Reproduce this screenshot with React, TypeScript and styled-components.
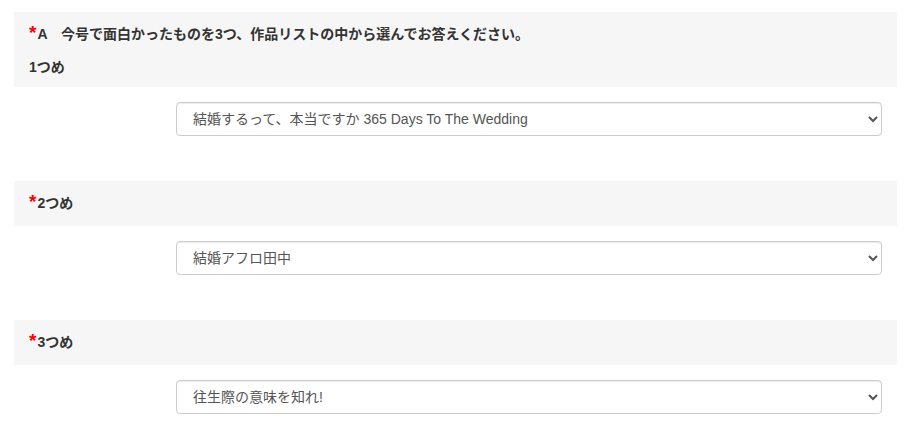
import React from "react";
import styled, { createGlobalStyle } from "styled-components";

const Global = createGlobalStyle`
  html, body { margin: 0; padding: 0; background: #fff; }
  body {
    font-family: "Liberation Sans", Arial, "Noto Sans CJK JP", sans-serif;
    font-size: 14px;
    color: #333;
  }
`;

const Page = styled.div`
  padding: 12px 21px 0 14px;
  display: flex;
  flex-direction: column;
`;

const Question = styled.section`
  display: flex;
  flex-direction: column;
  margin-bottom: 45px;
`;

const Heading = styled.div<{ $tall?: boolean }>`
  background: #f6f6f6;
  padding: ${(p) => (p.$tall ? "12px 15px 10px" : "12px 15px 13px")};
  display: flex;
  flex-direction: column;
  gap: 13px;
  font-weight: bold;
`;

const Line = styled.div`
  line-height: 20px;
  white-space: nowrap;
`;

const Req = styled.span`
  color: #ff0000;
  font-size: 19px;
  font-weight: bold;
  line-height: 18px;
  vertical-align: top;
  display: inline-block;
  margin-right: 1px;
`;

const Field = styled.div`
  padding: 15px 15px 0 162px;
`;

const Select = styled.select`
  display: block;
  width: 100%;
  height: 34px;
  padding: 6px 12px;
  border: 1px solid #ccc;
  border-radius: 4px;
  background: #fff;
  color: #555;
  font-family: "Liberation Sans", Arial, "Noto Sans CJK JP", sans-serif;
  font-size: 14px;
  box-shadow: inset 0 1px 1px rgba(0, 0, 0, 0.075);
`;

const items = [
  { label: "2つめ", value: "結婚アフロ田中" },
  { label: "3つめ", value: "往生際の意味を知れ!" },
];

export default function App() {
  return (
    <>
      <Global />
      <Page>
        <Question>
          <Heading $tall>
            <Line>
              <Req>*</Req>A　今号で面白かったものを3つ、作品リストの中から選んでお答えください。
            </Line>
            <Line>1つめ</Line>
          </Heading>
          <Field>
            <Select defaultValue="a">
              <option value="a">結婚するって、本当ですか 365 Days To The Wedding</option>
            </Select>
          </Field>
        </Question>
        {items.map((it) => (
          <Question key={it.label}>
            <Heading>
              <Line>
                <Req>*</Req>
                {it.label}
              </Line>
            </Heading>
            <Field>
              <Select defaultValue="a">
                <option value="a">{it.value}</option>
              </Select>
            </Field>
          </Question>
        ))}
      </Page>
    </>
  );
}
